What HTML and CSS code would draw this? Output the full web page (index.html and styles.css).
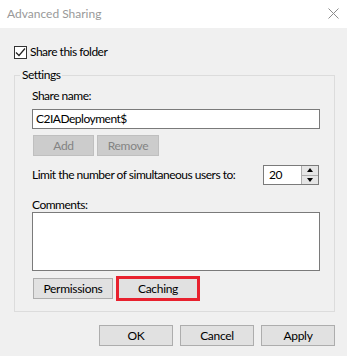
FILE: index.html
```html
<!DOCTYPE html>
<html lang="en">
<head>
    <meta charset="UTF-8">
    <title>Advanced Sharing</title>
    <link rel="stylesheet" href="styles.css">
</head>
<body>

<div class="titlebar">
    <span class="title">Advanced Sharing</span>
    <svg class="close" width="11" height="11" viewBox="0 0 11 11">
        <path d="M0.5 0.5 L10.5 10.5 M10.5 0.5 L0.5 10.5" stroke="#8c8c8c" stroke-width="1" fill="none"/>
    </svg>
</div>

<div class="content">
    <label class="check-row">
        <span class="checkbox">
            <svg width="11" height="11" viewBox="0 0 11 11">
                <path d="M1 5.5 L4 8.5 L10 1.5" stroke="#222" stroke-width="1.2" fill="none"/>
            </svg>
        </span>
        Share this folder
    </label>

    <fieldset class="settings">
        <legend>Settings</legend>
        <div class="label">Share name:</div>
        <div class="textbox">C2IADeployment$</div>
        <div class="btn-row small">
            <button class="button disabled">Add</button>
            <button class="button disabled remove">Remove</button>
        </div>
        <div class="limit-row">
            <span>Limit the number of simultaneous users to:</span>
            <div class="spinner">
                <span class="spin-value">20</span>
                <div class="spin-btns">
                    <span class="spin up"></span>
                    <span class="spin down"></span>
                </div>
            </div>
        </div>
        <div class="label comments-label">Comments:</div>
        <div class="textarea"></div>
        <div class="btn-row bottom">
            <button class="button wide">Permissions</button>
            <button class="button wide highlight">Caching</button>
        </div>
    </fieldset>

    <div class="dialog-buttons">
        <button class="button dialog">OK</button>
        <button class="button dialog">Cancel</button>
        <button class="button dialog">Apply</button>
    </div>
</div>

</body>
</html>
```

FILE: styles.css
```css
body {
    margin: 0;
    background-color: #f0f0f0;
    font-family: Lato, "Noto Sans", Arial, sans-serif;
    font-size: 12px;
    line-height: 16px;
    letter-spacing: -0.5px;
    color: #000;
    white-space: nowrap;
}
.titlebar {
    height: 28px;
    background-color: #fff;
    display: flex;
    align-items: center;
    justify-content: space-between;
    padding: 0 8px 0 7px;
}
.title {
    color: #999;
    letter-spacing: 0;
}
.close {
    margin-top: -1px;
}
.content {
    padding: 16px 12px 0 14px;
}
.check-row {
    display: flex;
    align-items: center;
    gap: 3px;
}
.checkbox {
    width: 11px;
    height: 11px;
    border: 1px solid #333;
    background-color: #fff;
    display: flex;
}
.settings {
    margin: 7px 0 0 0;
    width: 321px;
    box-sizing: border-box;
    border: 1px solid #dcdcdc;
    padding: 5px 14px 12px 17px;
}
.settings legend {
    margin-left: -12px;
    padding: 0 2px;
}
.label {
    margin-bottom: 5px;
}
.textbox {
    height: 18px;
    line-height: 18px;
    border: 1px solid #7a7a7a;
    background-color: #fff;
    padding-left: 3px;
}
.btn-row {
    display: flex;
    gap: 3px;
    margin-top: 6px;
    padding-left: 1px;
}
.button {
    font-family: inherit;
    font-size: 12px;
    letter-spacing: -0.3px;
    height: 21px;
    padding: 0;
    margin: 0;
    background-color: #e1e1e1;
    border: 1px solid #adadad;
    color: #000;
}
.button.disabled {
    background-color: #cccccc;
    border-color: #bfbfbf;
    color: #838383;
    width: 61px;
}
.button.remove {
    width: 62px;
}
.limit-row {
    display: flex;
    align-items: center;
    justify-content: space-between;
    margin-top: 9px;
    padding-right: 1px;
}
.spinner {
    width: 56px;
    height: 20px;
    box-sizing: border-box;
    border: 1px solid #7a7a7a;
    background-color: #fff;
    display: flex;
    justify-content: space-between;
}
.spin-value {
    padding-left: 5px;
    line-height: 18px;
}
.spin-btns {
    width: 16px;
    display: flex;
    flex-direction: column;
    border-left: 1px solid #adadad;
}
.spin {
    flex: 1;
    background-color: #e5e5e5;
    display: flex;
    align-items: center;
    justify-content: center;
}
.spin.up {
    border-bottom: 1px solid #adadad;
}
.spin::before {
    content: "";
    border-left: 3px solid transparent;
    border-right: 3px solid transparent;
}
.spin.up::before {
    border-bottom: 4px solid #000;
}
.spin.down::before {
    border-top: 4px solid #000;
}
.comments-label {
    margin-top: 12px;
    margin-bottom: 0;
    line-height: 15px;
}
.textarea {
    height: 57px;
    border: 1px solid #7a7a7a;
    background-color: #fff;
}
.btn-row.bottom {
    margin-top: 7px;
    gap: 5px;
}
.button.wide {
    width: 80px;
}
.highlight {
    outline: 3px solid #e8212e;
    outline-offset: -1px;
}
.dialog-buttons {
    display: flex;
    justify-content: flex-end;
    gap: 7px;
    margin-top: 13px;
}
.button.dialog {
    width: 74px;
}
```
